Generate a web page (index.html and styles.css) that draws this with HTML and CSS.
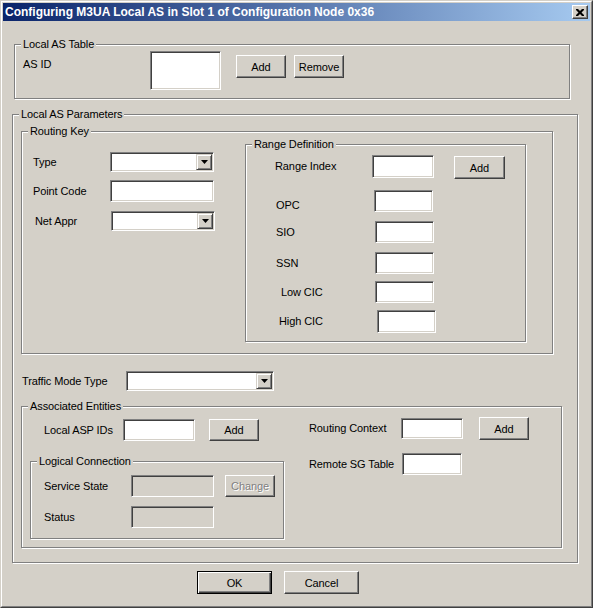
FILE: index.html
```html
<!DOCTYPE html>
<html>
<head>
<meta charset="utf-8">
<link rel="stylesheet" href="styles.css">
</head>
<body>
<div class="window">
  <div class="window-inner">
    <div class="titlebar">
      <span class="title-text">Configuring M3UA Local AS in Slot 1 of Configuration Node 0x36</span>
      <span class="close"><svg width="8" height="7" viewBox="0 0 8 7"><path d="M0 0h2l2 2 2-2h2v1l-2.5 2.5L8 6v1H6L4 5 2 7H0V6l2.5-2.5L0 1z" fill="#000"/></svg></span>
    </div>

    <div class="group g-table">
      <span class="legend">Local AS Table</span>
      <div class="table-row">
        <span class="lbl lbl-asid">AS ID</span>
        <span class="edit e-asid"></span>
        <span class="btn b-add1">Add</span>
        <span class="btn b-remove">Remove</span>
      </div>
    </div>

    <div class="group g-params">
      <span class="legend">Local AS Parameters</span>

      <div class="group g-rk">
        <span class="legend">Routing Key</span>
        <div class="rk-body">
          <div class="rk-left">
            <div class="row r-type">
              <span class="lbl l-type">Type</span>
              <span class="combo c-type"><span class="dd"><svg width="7" height="4" viewBox="0 0 7 4"><path d="M0 0h7L3.5 4z" fill="#000"/></svg></span></span>
            </div>
            <div class="row r-pc">
              <span class="lbl l-type">Point Code</span>
              <span class="edit e-pc"></span>
            </div>
            <div class="row r-na">
              <span class="lbl l-na">Net Appr</span>
              <span class="combo c-type"><span class="dd"><svg width="7" height="4" viewBox="0 0 7 4"><path d="M0 0h7L3.5 4z" fill="#000"/></svg></span></span>
            </div>
          </div>

          <div class="group g-range">
            <span class="legend">Range Definition</span>
            <div class="row r-ri">
              <span class="lbl l-ri">Range Index</span>
              <span class="edit e-ri"></span>
              <span class="btn b-add2">Add</span>
            </div>
            <div class="row r-opc">
              <span class="lbl l-opc">OPC</span>
              <span class="edit e-rg"></span>
            </div>
            <div class="row r-sio">
              <span class="lbl l-sio">SIO</span>
              <span class="edit e-rg"></span>
            </div>
            <div class="row r-ssn">
              <span class="lbl l-sio">SSN</span>
              <span class="edit e-rg"></span>
            </div>
            <div class="row r-low">
              <span class="lbl l-low">Low CIC</span>
              <span class="edit e-rg"></span>
            </div>
            <div class="row r-high">
              <span class="lbl l-high">High CIC</span>
              <span class="edit e-rg e-high"></span>
            </div>
          </div>
        </div>
      </div>

      <div class="row r-traffic">
        <span class="lbl l-traffic">Traffic Mode Type</span>
        <span class="combo c-traffic"><span class="dd"><svg width="7" height="4" viewBox="0 0 7 4"><path d="M0 0h7L3.5 4z" fill="#000"/></svg></span></span>
      </div>

      <div class="group g-assoc">
        <span class="legend">Associated Entities</span>
        <div class="ae-body">
          <div class="ae-left">
            <div class="row r-asp">
              <span class="lbl l-asp">Local ASP IDs</span>
              <span class="edit e-asp"></span>
              <span class="btn b-add3">Add</span>
            </div>
            <div class="group g-logical">
              <span class="legend">Logical Connection</span>
              <div class="row r-ss">
                <span class="lbl l-ss">Service State</span>
                <span class="edit disabled e-ss"></span>
                <span class="btn disabled-btn b-change">Change</span>
              </div>
              <div class="row r-status">
                <span class="lbl l-ss">Status</span>
                <span class="edit disabled e-ss"></span>
              </div>
            </div>
          </div>
          <div class="ae-right">
            <div class="row r-rc">
              <span class="lbl l-rc">Routing Context</span>
              <span class="edit e-rc"></span>
              <span class="btn b-add4">Add</span>
            </div>
            <div class="row r-sg">
              <span class="lbl l-sg">Remote SG Table</span>
              <span class="edit e-sg"></span>
            </div>
          </div>
        </div>
      </div>
    </div>

    <div class="bottom-row">
      <span class="btn default-btn b-ok">OK</span>
      <span class="btn b-cancel">Cancel</span>
    </div>
  </div>
</div>
</body>
</html>
```

FILE: styles.css
```css
html, body {
  margin: 0;
  padding: 0;
  background: #d4d0c8;
}
body {
  font-family: "Liberation Sans", Arial, sans-serif;
  font-size: 11px;
  color: #000;
  letter-spacing: -0.1px;
}
.window {
  width: 593px;
  height: 608px;
  box-sizing: border-box;
  border: 1px solid;
  border-color: #d4d0c8 #404040 #404040 #d4d0c8;
  background: #d4d0c8;
}
.window-inner {
  height: 100%;
  box-sizing: border-box;
  border: 1px solid;
  border-color: #fff #808080 #808080 #fff;
  padding: 1px;
}
.titlebar {
  height: 18px;
  display: flex;
  align-items: center;
  background: linear-gradient(to right, #0a246a, #a6caf0);
  color: #fff;
  font-weight: bold;
  padding-left: 2px;
}
.title-text {
  flex: 1;
  white-space: nowrap;
  font-size: 12px;
  letter-spacing: 0;
}
.close {
  width: 16px;
  height: 14px;
  margin-right: 2px;
  box-sizing: border-box;
  background: #d4d0c8;
  border: 1px solid;
  border-color: #fff #404040 #404040 #fff;
  box-shadow: inset -1px -1px 0 #808080;
  display: flex;
  align-items: center;
  justify-content: center;
}
.close svg { display: block; }

/* group boxes */
.group {
  position: relative;
  box-sizing: border-box;
  border: 1px solid #808080;
  box-shadow: inset 1px 1px 0 #fff, 1px 1px 0 #fff;
}
.legend {
  position: absolute;
  left: 6px;
  top: -8px;
  line-height: 14px;
  padding: 0 2px;
  background: #d4d0c8;
  white-space: nowrap;
}

/* controls */
.lbl {
  display: block;
  line-height: 13px;
  white-space: nowrap;
  flex: none;
}
.edit {
  display: block;
  flex: none;
  box-sizing: border-box;
  background: #fff;
  border: 1px solid;
  border-color: #808080 #fff #fff #808080;
  box-shadow: inset 1px 1px 0 #404040, inset -1px -1px 0 #d4d0c8;
}
.edit.disabled { background: #d4d0c8; }
.combo {
  display: flex;
  flex: none;
  justify-content: flex-end;
  box-sizing: border-box;
  height: 20px;
  padding: 1px;
  background: #fff;
  border: 1px solid;
  border-color: #808080 #fff #fff #808080;
  box-shadow: inset 1px 1px 0 #404040, inset -1px -1px 0 #d4d0c8;
}
.dd {
  width: 16px;
  height: 100%;
  box-sizing: border-box;
  background: #d4d0c8;
  border: 1px solid;
  border-color: #d4d0c8 #404040 #404040 #d4d0c8;
  box-shadow: inset 1px 1px 0 #fff, inset -1px -1px 0 #808080;
  display: flex;
  align-items: center;
  justify-content: center;
}
.dd svg { display: block; }
.btn {
  display: flex;
  flex: none;
  align-items: center;
  justify-content: center;
  box-sizing: border-box;
  width: 50px;
  height: 23px;
  background: #d4d0c8;
  border: 1px solid;
  border-color: #fff #404040 #404040 #fff;
  box-shadow: inset -1px -1px 0 #808080;
  white-space: nowrap;
}
.default-btn {
  border-color: #000;
  box-shadow: inset 1px 1px 0 #fff, inset -1px -1px 0 #404040, inset -2px -2px 0 #808080;
}
.disabled-btn {
  color: #808080;
  text-shadow: 1px 1px 0 #fff;
}
.row {
  display: flex;
  align-items: center;
}

/* Local AS Table */
.g-table {
  margin: 23px 0 0 11px;
  width: 556px;
  height: 55px;
}
.table-row {
  display: flex;
  align-items: flex-start;
  padding-left: 8px;
}
.lbl-asid { margin-top: 13px; width: 127px; }
.e-asid { margin-top: 6px; width: 71px; height: 39px; }
.b-add1 { margin-top: 10px; margin-left: 15px; }
.b-remove { margin-top: 10px; margin-left: 8px; }

/* Local AS Parameters */
.g-params {
  margin: 15px 0 0 9px;
  width: 566px;
  height: 449px;
}
.g-rk {
  margin: 16px 0 0 8px;
  width: 532px;
  height: 223px;
}
.rk-body { display: flex; }
.rk-left { width: 223px; flex: none; }
.r-type { margin-top: 20px; }
.l-type { margin-left: 11px; width: 77px; }
.c-type { width: 104px; }
.r-pc { margin-top: 8px; }
.e-pc { width: 104px; height: 22px; }
.r-na { margin-top: 9px; }
.l-na { margin-left: 13px; width: 76px; }

.g-range {
  margin-top: 12px;
  width: 281px;
  height: 198px;
  flex: none;
}
.r-ri { margin-top: 9px; }
.l-ri { margin-left: 29px; width: 97px; }
.e-ri { width: 62px; height: 23px; }
.b-add2 { margin-left: 20px; width: 51px; margin-top: 2px; }
.e-rg { width: 59px; height: 22px; }
.r-opc { margin-top: 11px; }
.l-opc { margin-left: 30px; width: 98px; margin-top: 8px; }
.r-sio, .r-ssn { margin-top: 9px; }
.l-sio { margin-left: 30px; width: 99px; }
.r-low { margin-top: 7px; }
.l-low { margin-left: 35px; width: 94px; }
.r-high { margin-top: 7px; }
.l-high { margin-left: 33px; width: 98px; }
.e-high { height: 23px; }

.r-traffic { margin: 17px 0 0 9px; }
.l-traffic { width: 104px; }
.c-traffic { width: 148px; }

.g-assoc {
  margin: 15px 0 0 8px;
  width: 541px;
  height: 142px;
}
.ae-body { display: flex; }
.ae-left { width: 287px; flex: none; }
.r-asp { margin-top: 12px; }
.l-asp { margin-left: 22px; width: 79px; }
.e-asp { width: 72px; height: 22px; }
.b-add3 { margin-left: 14px; height: 22px; }
.g-logical {
  margin: 20px 0 0 8px;
  width: 254px;
  height: 78px;
}
.r-ss { margin-top: 13px; }
.l-ss { margin-left: 13px; width: 87px; }
.e-ss { width: 83px; height: 22px; }
.b-change { margin-left: 11px; height: 22px; }
.r-status { margin-top: 9px; }

.r-rc { margin-top: 10px; }
.l-rc { width: 92px; }
.e-rc { width: 62px; height: 21px; }
.b-add4 { margin-left: 16px; }
.r-sg { margin-top: 13px; }
.l-sg { width: 93px; }
.e-sg { width: 60px; height: 22px; }

/* bottom buttons */
.bottom-row {
  display: flex;
  margin: 8px 0 0 194px;
}
.b-ok, .b-cancel { width: 75px; height: 23px; }
.b-cancel { margin-left: 12px; }
```
